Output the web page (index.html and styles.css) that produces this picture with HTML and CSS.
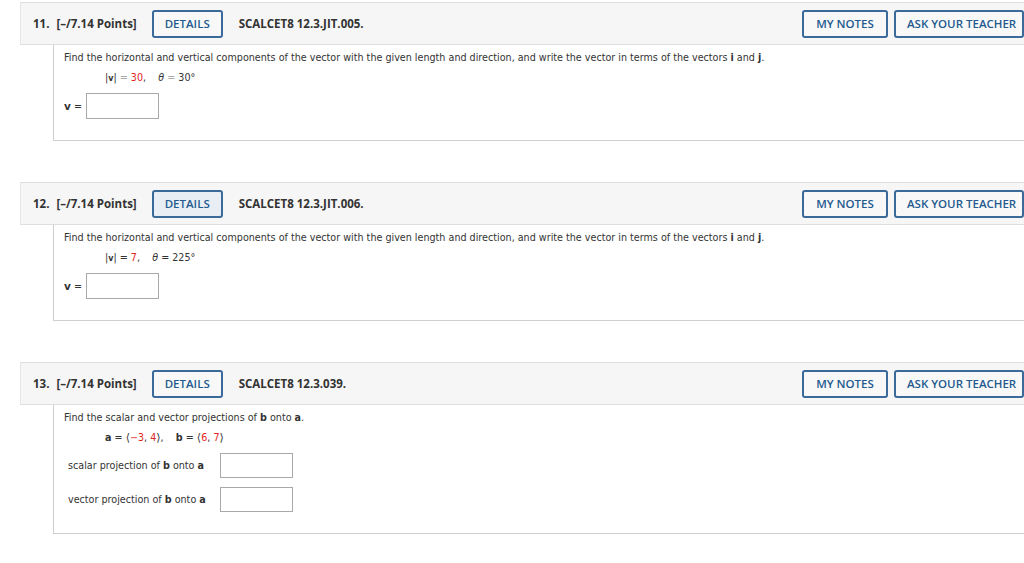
FILE: index.html
```html
<!DOCTYPE html>
<html>
<head>
<meta charset="utf-8">
<link rel="stylesheet" href="styles.css">
</head>
<body>
<div class="page">
  <section class="question">
    <div class="qhead">
      <span class="qnum">11.</span>
      <span class="qpts">[–/7.14 Points]</span>
      <button class="btn">DETAILS</button>
      <span class="qcode">SCALCET8 12.3.JIT.005.</span>
      <span class="qright">
        <button class="btn notes">MY NOTES</button>
        <button class="btn ask">ASK YOUR TEACHER</button>
      </span>
    </div>
    <div class="qbody">
      <p class="prompt">Find the horizontal and vertical components of the vector with the given length and direction, and write the vector in terms of the vectors <b>i</b> and <b>j</b>.</p>
      <p class="given">|<b class="sv">v</b>| <span class="eq light">=</span> <span class="red">30</span>,&nbsp;&nbsp;&nbsp; <i>θ</i> <span class="eq light">=</span> 30°</p>
      <div class="answer"><span class="alabel"><b>v</b> =</span><span class="box"></span></div>
    </div>
  </section>

  <section class="question">
    <div class="qhead">
      <span class="qnum">12.</span>
      <span class="qpts">[–/7.14 Points]</span>
      <button class="btn active">DETAILS</button>
      <span class="qcode">SCALCET8 12.3.JIT.006.</span>
      <span class="qright">
        <button class="btn notes">MY NOTES</button>
        <button class="btn ask">ASK YOUR TEACHER</button>
      </span>
    </div>
    <div class="qbody">
      <p class="prompt">Find the horizontal and vertical components of the vector with the given length and direction, and write the vector in terms of the vectors <b>i</b> and <b>j</b>.</p>
      <p class="given">|<b class="sv">v</b>| <span class="eq">=</span> <span class="red">7</span>,&nbsp;&nbsp;&nbsp; <i>θ</i> <span class="eq">=</span> 225°</p>
      <div class="answer"><span class="alabel"><b>v</b> =</span><span class="box"></span></div>
    </div>
  </section>

  <section class="question">
    <div class="qhead">
      <span class="qnum">13.</span>
      <span class="qpts">[–/7.14 Points]</span>
      <button class="btn">DETAILS</button>
      <span class="qcode">SCALCET8 12.3.039.</span>
      <span class="qright">
        <button class="btn notes">MY NOTES</button>
        <button class="btn ask">ASK YOUR TEACHER</button>
      </span>
    </div>
    <div class="qbody">
      <p class="prompt">Find the scalar and vector projections of <b>b</b> onto <b>a</b>.</p>
      <p class="given"><b>a</b> = <span class="ang">⟨</span><span class="red">−3</span>, <span class="red">4</span><span class="ang">⟩</span>,&nbsp;&nbsp;&nbsp; <b>b</b> = <span class="ang">⟨</span><span class="red">6</span>, <span class="red">7</span><span class="ang">⟩</span></p>
      <div class="proj">
        <span class="plabel">scalar projection of <b>b</b> onto <b>a</b></span><span class="box"></span>
        <span class="plabel">vector projection of <b>b</b> onto <b>a</b></span><span class="box"></span>
      </div>
    </div>
  </section>
</div>
</body>
</html>
```
FILE: styles.css
```css
html, body {
  margin: 0;
  padding: 0;
  background: #fff;
  overflow: hidden;
}
.page {
  padding: 2px 0 0 20px;
  width: 1004px;
}
.question {
  margin-bottom: 41px;
}
.qhead {
  display: flex;
  align-items: center;
  height: 41px;
  background: #f6f6f6;
  border-top: 1px solid #dedede;
  border-bottom: 1px solid #dedede;
  border-left: 1px solid #e6e6e6;
  padding-left: 12px;
  font-family: "Open Sans", sans-serif;
  font-weight: 700;
  font-size: 11.5px;
  color: #333;
}
.qnum { margin-right: 7px; }
.qpts { margin-right: 15px; }
.qcode { margin-left: 16px; }
.btn {
  font-family: "Open Sans", sans-serif;
  font-weight: 600;
  font-size: 11.5px;
  color: #245a8f;
  background: #f8f8f8;
  border: 2px solid #3a6a9a;
  border-radius: 3px;
  height: 28px;
  padding: 0 11px;
  margin: 0;
  cursor: pointer;
}
.btn.active { background: #e8eef3; }
.qright {
  margin-left: auto;
  display: flex;
  gap: 6px;
}
.btn.notes { width: 86px; padding: 0; }
.btn.ask { width: 130px; text-align: left; padding: 0 0 0 11px; }
.qbody {
  margin-left: 33px;
  border-left: 1px solid #cfcfcf;
  border-bottom: 1px solid #cfcfcf;
  padding: 6px 0 21px 10px;
  font-family: "DejaVu Sans", Verdana, sans-serif;
  font-size: 9.6px;
  color: #333;
}
.prompt {
  margin: 0;
  line-height: 14px;
}
.given {
  margin: 6px 0 0 0;
  padding-left: 41px;
  line-height: 14px;
}
.sv { font-size: 8px; }
.eq.light { color: #aaa; }
.red { color: #e0261c; }
.ang { font-size: 11px; }
.answer {
  margin-top: 7px;
  display: flex;
  align-items: center;
  gap: 4px;
}
.alabel b { font-size: 10.5px; }
.box {
  display: block;
  width: 71px;
  height: 24px;
  border: 1px solid #a9a9a9;
  background: #fff;
}
.proj {
  margin-top: 8px;
  padding-left: 4px;
  display: grid;
  grid-template-columns: 152px 73px;
  row-gap: 9px;
  align-items: center;
}
.proj .box { height: 23px; }
```
